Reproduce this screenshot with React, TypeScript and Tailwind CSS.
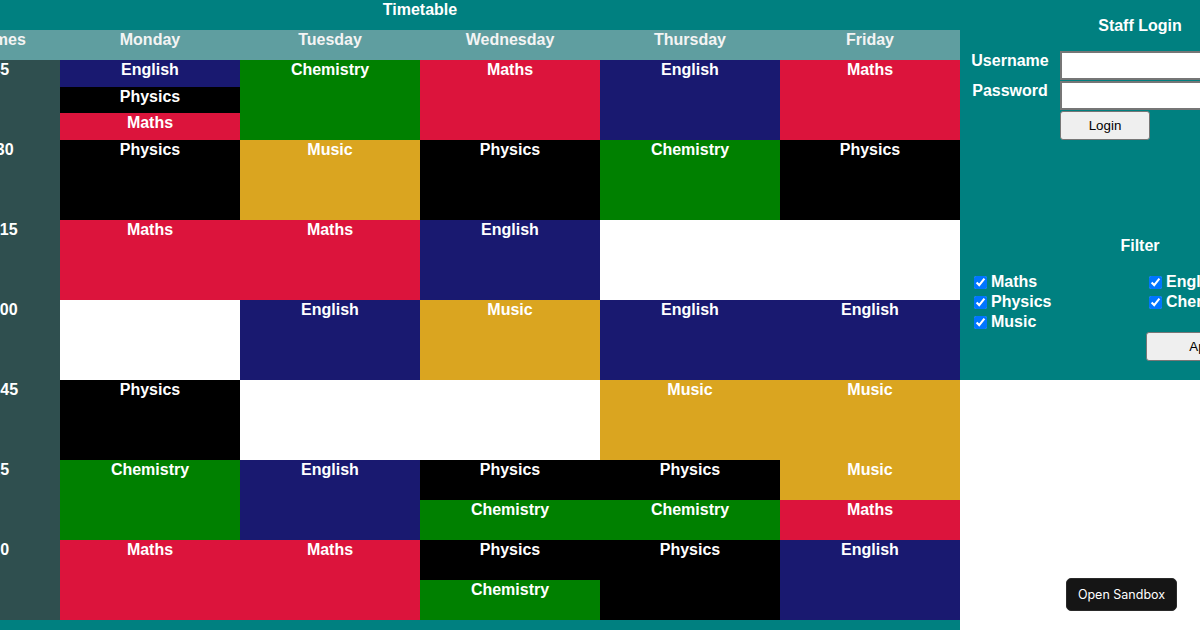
import React from "react"

type Subject = "English" | "Physics" | "Maths" | "Chemistry" | "Music"

const colours: Record<Subject, string> = {
  English: "bg-[#191970]",
  Physics: "bg-[#000000]",
  Maths: "bg-[#dc143c]",
  Chemistry: "bg-[#008000]",
  Music: "bg-[#daa520]",
}

const days = ["Monday", "Tuesday", "Wednesday", "Thursday", "Friday"]

// one entry per lesson slot, then a list of subjects per day (empty = free)
const rows: { time: string; lessons: Subject[][] }[] = [
  { time: "9:00 - 9:45", lessons: [["English", "Physics", "Maths"], ["Chemistry"], ["Maths"], ["English"], ["Maths"]] },
  { time: "9:45 - 10:30", lessons: [["Physics"], ["Music"], ["Physics"], ["Chemistry"], ["Physics"]] },
  { time: "10:30 - 11:15", lessons: [["Maths"], ["Maths"], ["English"], [], []] },
  { time: "11:15 - 12:00", lessons: [[], ["English"], ["Music"], ["English"], ["English"]] },
  { time: "12:00 - 12:45", lessons: [["Physics"], [], [], ["Music"], ["Music"]] },
  { time: "1:30 - 2:15", lessons: [["Chemistry"], ["English"], ["Physics", "Chemistry"], ["Physics", "Chemistry"], ["Music", "Maths"]] },
  { time: "2:15 - 3:00", lessons: [["Maths"], ["Maths"], ["Physics", "Chemistry"], ["Physics"], ["English"]] },
]

const filters: Subject[] = ["Maths", "English", "Physics", "Chemistry", "Music"]

function LessonCell({ subjects }: { subjects: Subject[] }) {
  if (subjects.length === 0) return <div className="h-[80px] bg-white" />
  return (
    <div className="flex h-[80px] flex-col">
      {subjects.map((s, i) => (
        <div key={i} className={`flex-1 pt-[1px] text-center font-bold text-white ${colours[s]}`}>
          {s}
        </div>
      ))}
    </div>
  )
}

export default function App() {
  return (
    <div className="relative h-[630px] w-[1200px] overflow-hidden bg-white font-['Liberation_Sans',Arial,sans-serif] text-[16px] leading-[18px]">
      <div className="-ml-[120px] flex w-[1440px] items-start">
        {/* Timetable */}
        <div className="w-[1080px] bg-[#008080] pb-[20px]">
          <div className="h-[30px] pt-[1px] text-center font-bold text-white">Timetable</div>
          <div className="grid h-[30px] grid-cols-6 bg-[#5f9ea0] pt-[1px] text-center font-bold text-[#f4f4f4]">
            <div className="whitespace-nowrap">Session Times</div>
            {days.map((d) => (
              <div key={d}>{d}</div>
            ))}
          </div>
          {rows.map((row, r) => (
            <div key={r} className="grid grid-cols-6">
              <div className="h-[80px] whitespace-nowrap bg-[#2f4f4f] pt-[1px] text-center font-bold text-white">{row.time}</div>
              {row.lessons.map((l, d) => (
                <LessonCell key={d} subjects={l} />
              ))}
            </div>
          ))}
        </div>

        {/* Side panel */}
        <div className="h-[380px] w-[360px] bg-[#008080] pt-[17px] text-white">
          <div className="text-center font-bold">Staff Login</div>
          <div className="mt-[16px] flex flex-col gap-[1px]">
            <div className="flex items-start">
              <label className="w-[100px] pt-[1px] text-center font-bold">Username</label>
              <input type="text" className="h-[29px] w-[240px] border-2 border-[#767676] bg-white outline-none" />
            </div>
            <div className="flex items-start">
              <label className="w-[100px] pt-[1px] text-center font-bold">Password</label>
              <input type="password" className="h-[29px] w-[240px] border-2 border-[#767676] bg-white outline-none" />
            </div>
            <div className="flex">
              <div className="w-[100px]" />
              <button className="h-[29px] w-[90px] rounded-[3px] border border-[#767676] bg-[#efefef] text-[13.33px] text-black">
                Login
              </button>
            </div>
          </div>

          <div className="mt-[97px] text-center font-bold">Filter</div>
          <div className="ml-[10px] mt-[17px] grid w-[350px] grid-cols-2">
            {filters.map((f) => (
              <label key={f} className="flex h-[20px] items-center font-bold">
                <input type="checkbox" defaultChecked className="ml-[4px] mr-[3px] h-[13px] w-[13px] accent-[#0075ff]" />
                <span className="ml-[1px]">{f}</span>
              </label>
            ))}
            <div className="col-start-2 row-start-4 pl-[1px]">
              <button className="h-[29px] w-[120px] rounded-[3px] border border-[#767676] bg-[#efefef] text-[13.33px] text-black">
                Apply
              </button>
            </div>
          </div>
        </div>
      </div>

      <button className="absolute bottom-[19px] right-[23px] h-[33px] w-[111px] rounded-[5px] border border-[#2a2a2a] bg-[#151515] font-['Inter',sans-serif] text-[12.5px] text-white">
        Open Sandbox
      </button>
    </div>
  )
}
